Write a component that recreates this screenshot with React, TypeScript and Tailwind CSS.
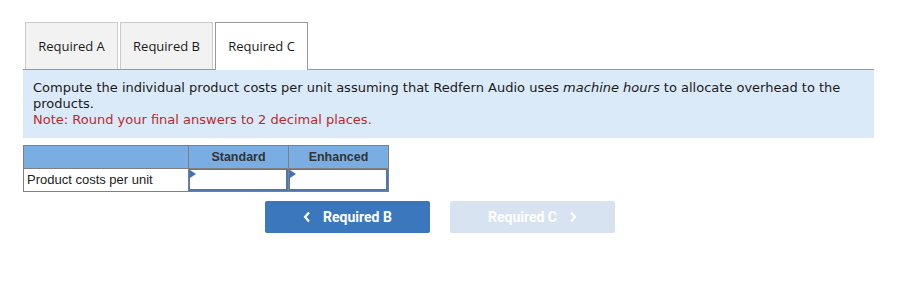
import React from 'react';

const tabs = ['Required A', 'Required B', 'Required C'];

const App: React.FC = () => {
  return (
    <div className="w-[912px] h-[307px] bg-white pl-[23px] pt-[22px]">
      {/* Tabs */}
      <div className="flex w-[851px] items-end border-b border-[#999] gap-[2px] pl-[2px]">
        {tabs.map((t, i) =>
          i === 2 ? (
            <div
              key={t}
              className="w-[93px] h-[48px] -mb-px flex items-center justify-center bg-white border border-b-0 border-[#999] text-[13px] text-[#1a1a1a] font-['Open_Sans',sans-serif]"
            >
              {t}
            </div>
          ) : (
            <div
              key={t}
              className="w-[93px] h-[47px] flex items-center justify-center bg-[#f2f2f2] border border-b-0 border-[#cccccc] text-[13px] text-[#1a1a1a] font-['Open_Sans',sans-serif] pt-[1px]"
            >
              {t}
            </div>
          )
        )}
      </div>

      {/* Instructions */}
      <div className="w-[851px] h-[68px] bg-[#dbeaf8] px-[10px] pt-[10px] text-[13px] leading-[16px] text-[#1a1a1a] font-['DejaVu_Sans',Verdana,sans-serif]">
        <p>
          Compute the individual product costs per unit assuming that Redfern Audio uses{' '}
          <span className="italic">machine hours</span> to allocate overhead to the products.
        </p>
        <p className="text-[#c0272d]">Note: Round your final answers to 2 decimal places.</p>
      </div>

      {/* Table */}
      <table className="mt-[7px] border-collapse font-['Liberation_Sans',Arial,sans-serif] text-[13px] text-[#222]">
        <thead>
          <tr className="h-[23px] bg-[#7aaee3]">
            <th className="w-[165px] border border-[#808080]"></th>
            <th className="w-[100px] border border-[#808080] font-bold text-[12.5px] text-[#333] text-center">Standard</th>
            <th className="w-[100px] border border-[#808080] font-bold text-[12.5px] text-[#333] text-center">Enhanced</th>
          </tr>
        </thead>
        <tbody>
          <tr className="h-[23px]">
            <td className="border border-[#808080] px-[3px] text-left">Product costs per unit</td>
            {[0, 1].map((k) => (
              <td key={k} className="border border-[#808080] p-0">
                <div className="relative h-[22px] border-2 border-[#4d77ad] border-t border-l bg-white">
                  <svg className="absolute left-0 top-0" width="6" height="8" viewBox="0 0 6 8">
                    <path d="M0 0 L6 4 L0 8 Z" fill="#3f72b5" />
                  </svg>
                </div>
              </td>
            ))}
          </tr>
        </tbody>
      </table>

      {/* Navigation buttons */}
      <div className="flex gap-[20px] ml-[242px] mt-[9px] font-['Roboto',sans-serif] font-bold text-[14px] text-white">
        <button className="w-[165px] h-[32px] rounded-[2px] bg-[#3a77bc] flex items-center justify-center gap-[12px]">
          <svg width="8" height="12" viewBox="0 0 8 12">
            <path d="M6 1.5 L2 6 L6 10.5" stroke="white" strokeWidth="2.2" fill="none" />
          </svg>
          <span>Required B</span>
        </button>
        <button className="w-[165px] h-[32px] rounded-[2px] bg-[#d7e3f1] flex items-center justify-center gap-[12px]">
          <span>Required C</span>
          <svg width="8" height="12" viewBox="0 0 8 12">
            <path d="M2 1.5 L6 6 L2 10.5" stroke="white" strokeWidth="2.2" fill="none" />
          </svg>
        </button>
      </div>
    </div>
  );
};

export default App;
